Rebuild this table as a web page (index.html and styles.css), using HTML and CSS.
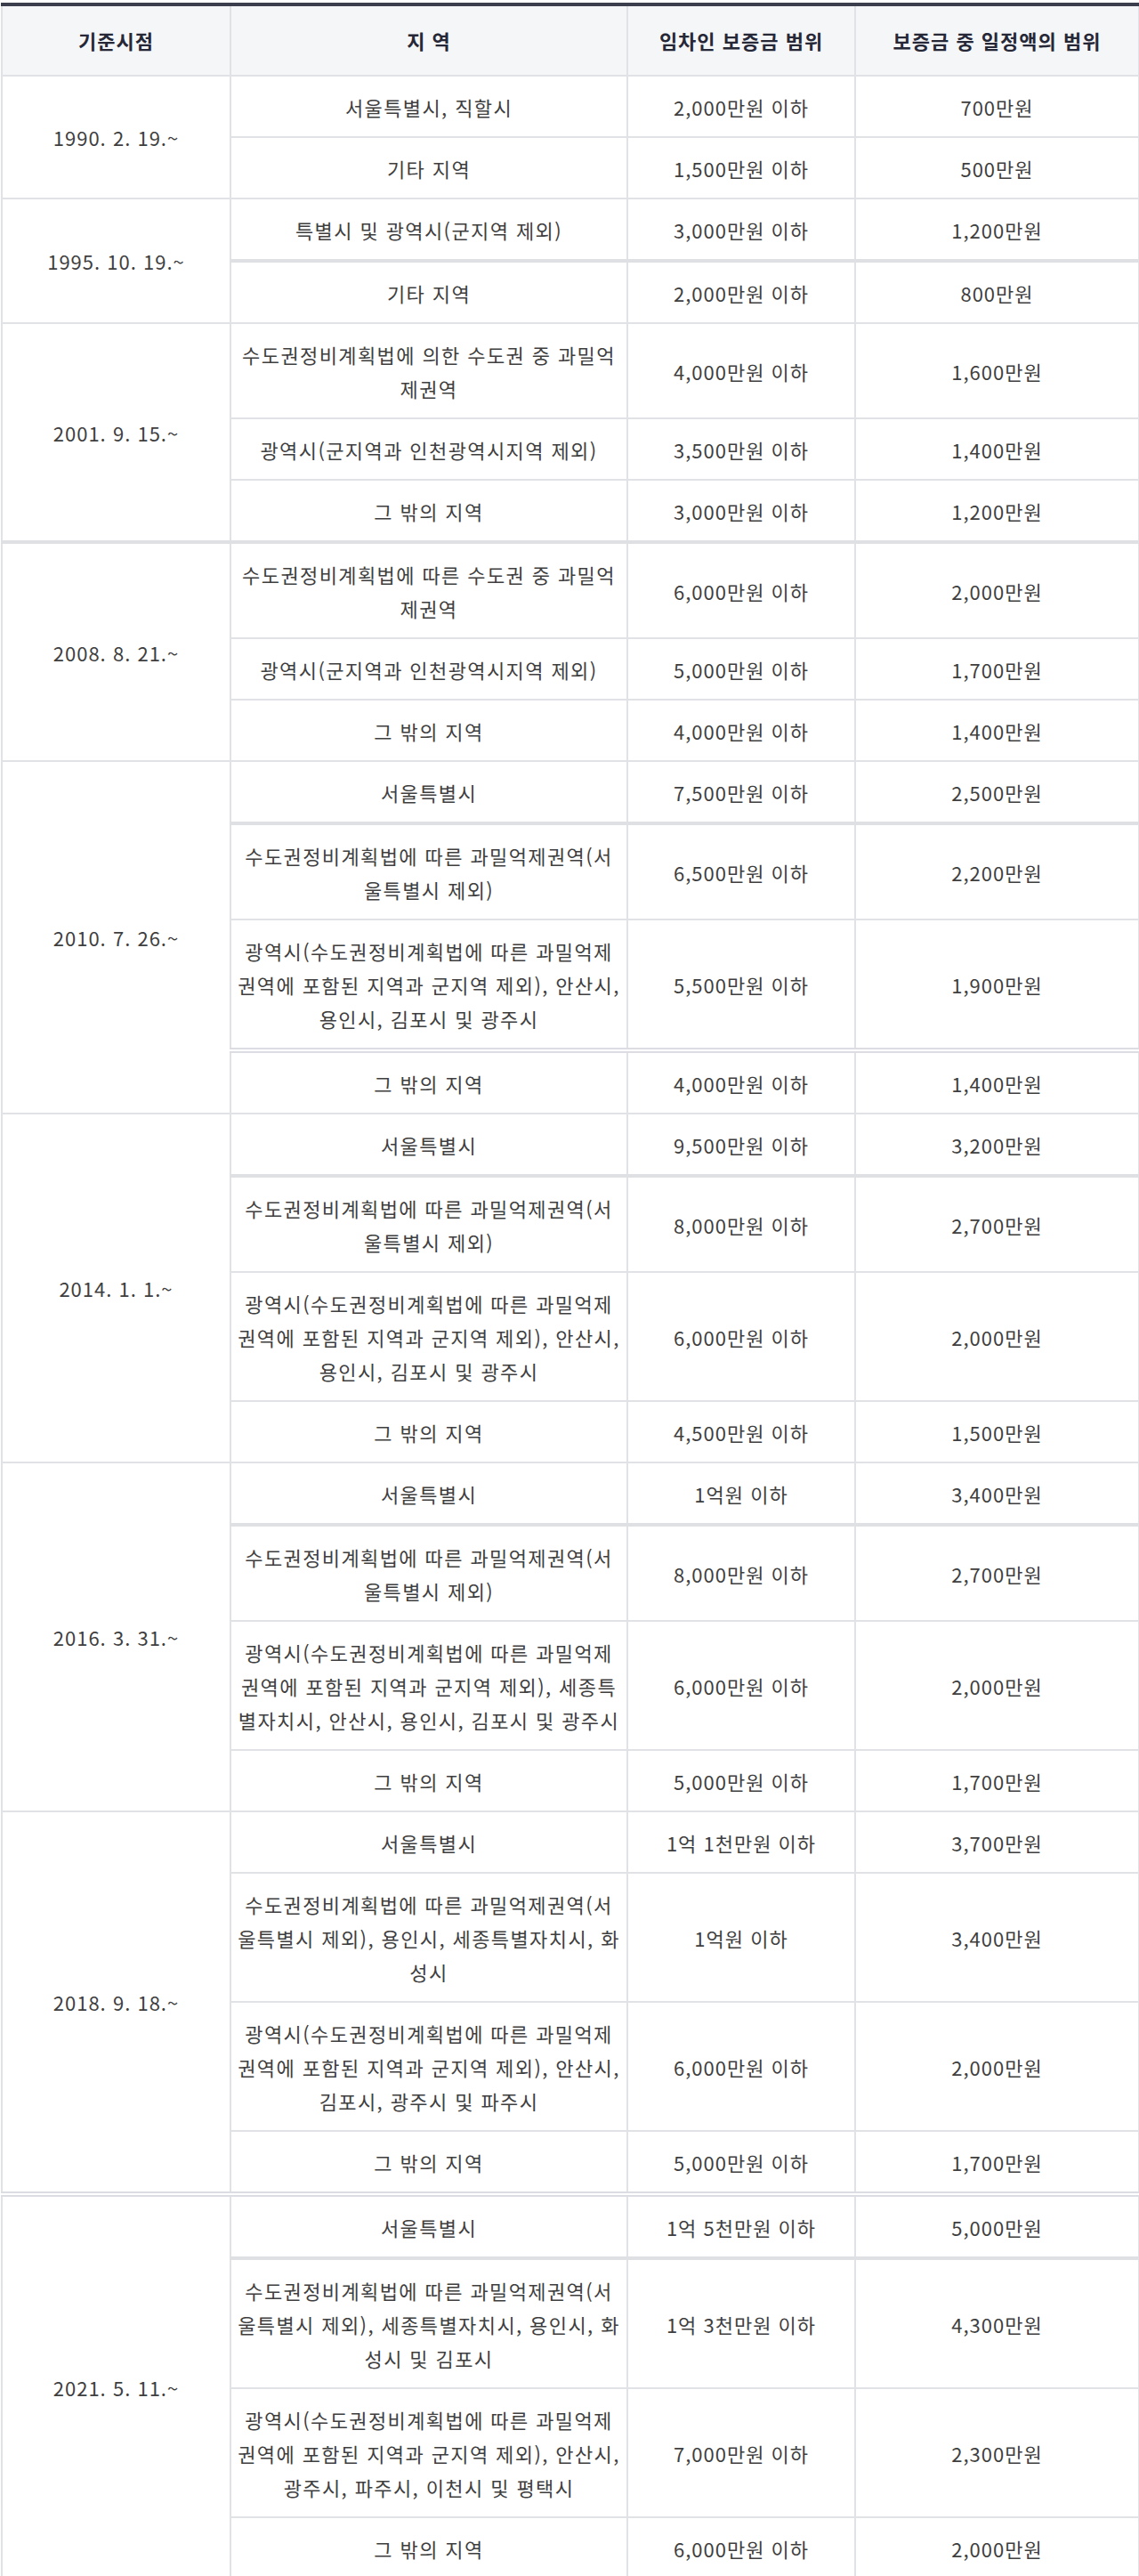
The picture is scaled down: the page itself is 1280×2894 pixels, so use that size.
FILE: index.html
```html
<!DOCTYPE html>
<html lang="ko">
<head>
<meta charset="utf-8">
<title>소액임차인 최우선변제 기준</title>
<link rel="stylesheet" href="styles.css">
</head>
<body>
<div class="wrap">
<table class="tbl">
  <colgroup>
    <col class="c-date">
    <col class="c-area">
    <col class="c-dep">
    <col class="c-amt">
  </colgroup>
  <thead>
    <tr>
      <th>기준시점</th>
      <th>지 역</th>
      <th>임차인 보증금 범위</th>
      <th>보증금 중 일정액의 범위</th>
    </tr>
  </thead>
  <tbody>
    <tr>
      <td rowspan="2">1990. 2. 19.~</td>
      <td class="area">서울특별시, 직할시</td>
      <td>2,000만원 이하</td>
      <td>700만원</td>
    </tr>
    <tr>
      <td class="area">기타 지역</td>
      <td>1,500만원 이하</td>
      <td>500만원</td>
    </tr>

    <tr>
      <td rowspan="2">1995. 10. 19.~</td>
      <td class="area">특별시 및 광역시(군지역 제외)</td>
      <td>3,000만원 이하</td>
      <td>1,200만원</td>
    </tr>
    <tr class="thick">
      <td class="area">기타 지역</td>
      <td>2,000만원 이하</td>
      <td>800만원</td>
    </tr>

    <tr>
      <td rowspan="3">2001. 9. 15.~</td>
      <td class="area">수도권정비계획법에 의한 수도권 중 과밀억<br>제권역</td>
      <td>4,000만원 이하</td>
      <td>1,600만원</td>
    </tr>
    <tr>
      <td class="area">광역시(군지역과 인천광역시지역 제외)</td>
      <td>3,500만원 이하</td>
      <td>1,400만원</td>
    </tr>
    <tr>
      <td class="area">그 밖의 지역</td>
      <td>3,000만원 이하</td>
      <td>1,200만원</td>
    </tr>

    <tr class="thick">
      <td rowspan="3">2008. 8. 21.~</td>
      <td class="area">수도권정비계획법에 따른 수도권 중 과밀억<br>제권역</td>
      <td>6,000만원 이하</td>
      <td>2,000만원</td>
    </tr>
    <tr>
      <td class="area">광역시(군지역과 인천광역시지역 제외)</td>
      <td>5,000만원 이하</td>
      <td>1,700만원</td>
    </tr>
    <tr>
      <td class="area">그 밖의 지역</td>
      <td>4,000만원 이하</td>
      <td>1,400만원</td>
    </tr>

    <tr>
      <td rowspan="4">2010. 7. 26.~</td>
      <td class="area">서울특별시</td>
      <td>7,500만원 이하</td>
      <td>2,500만원</td>
    </tr>
    <tr class="thick">
      <td class="area">수도권정비계획법에 따른 과밀억제권역(서<br>울특별시 제외)</td>
      <td>6,500만원 이하</td>
      <td>2,200만원</td>
    </tr>
    <tr>
      <td class="area">광역시(수도권정비계획법에 따른 과밀억제<br>권역에 포함된 지역과 군지역 제외), 안산시,<br>용인시, 김포시 및 광주시</td>
      <td>5,500만원 이하</td>
      <td>1,900만원</td>
    </tr>
    <tr class="dbl">
      <td class="area">그 밖의 지역</td>
      <td>4,000만원 이하</td>
      <td>1,400만원</td>
    </tr>

    <tr>
      <td rowspan="4">2014. 1. 1.~</td>
      <td class="area">서울특별시</td>
      <td>9,500만원 이하</td>
      <td>3,200만원</td>
    </tr>
    <tr class="thick">
      <td class="area">수도권정비계획법에 따른 과밀억제권역(서<br>울특별시 제외)</td>
      <td>8,000만원 이하</td>
      <td>2,700만원</td>
    </tr>
    <tr>
      <td class="area">광역시(수도권정비계획법에 따른 과밀억제<br>권역에 포함된 지역과 군지역 제외), 안산시,<br>용인시, 김포시 및 광주시</td>
      <td>6,000만원 이하</td>
      <td>2,000만원</td>
    </tr>
    <tr>
      <td class="area">그 밖의 지역</td>
      <td>4,500만원 이하</td>
      <td>1,500만원</td>
    </tr>

    <tr>
      <td rowspan="4">2016. 3. 31.~</td>
      <td class="area">서울특별시</td>
      <td>1억원 이하</td>
      <td>3,400만원</td>
    </tr>
    <tr class="thick">
      <td class="area">수도권정비계획법에 따른 과밀억제권역(서<br>울특별시 제외)</td>
      <td>8,000만원 이하</td>
      <td>2,700만원</td>
    </tr>
    <tr>
      <td class="area">광역시(수도권정비계획법에 따른 과밀억제<br>권역에 포함된 지역과 군지역 제외), 세종특<br>별자치시, 안산시, 용인시, 김포시 및 광주시</td>
      <td>6,000만원 이하</td>
      <td>2,000만원</td>
    </tr>
    <tr>
      <td class="area">그 밖의 지역</td>
      <td>5,000만원 이하</td>
      <td>1,700만원</td>
    </tr>

    <tr>
      <td rowspan="4">2018. 9. 18.~</td>
      <td class="area">서울특별시</td>
      <td>1억 1천만원 이하</td>
      <td>3,700만원</td>
    </tr>
    <tr>
      <td class="area">수도권정비계획법에 따른 과밀억제권역(서<br>울특별시 제외), 용인시, 세종특별자치시, 화<br>성시</td>
      <td>1억원 이하</td>
      <td>3,400만원</td>
    </tr>
    <tr>
      <td class="area">광역시(수도권정비계획법에 따른 과밀억제<br>권역에 포함된 지역과 군지역 제외), 안산시,<br>김포시, 광주시 및 파주시</td>
      <td>6,000만원 이하</td>
      <td>2,000만원</td>
    </tr>
    <tr>
      <td class="area">그 밖의 지역</td>
      <td>5,000만원 이하</td>
      <td>1,700만원</td>
    </tr>

    <tr class="dbl">
      <td rowspan="4">2021. 5. 11.~</td>
      <td class="area">서울특별시</td>
      <td>1억 5천만원 이하</td>
      <td>5,000만원</td>
    </tr>
    <tr class="thick">
      <td class="area">수도권정비계획법에 따른 과밀억제권역(서<br>울특별시 제외), 세종특별자치시, 용인시, 화<br>성시 및 김포시</td>
      <td>1억 3천만원 이하</td>
      <td>4,300만원</td>
    </tr>
    <tr>
      <td class="area">광역시(수도권정비계획법에 따른 과밀억제<br>권역에 포함된 지역과 군지역 제외), 안산시,<br>광주시, 파주시, 이천시 및 평택시</td>
      <td>7,000만원 이하</td>
      <td>2,300만원</td>
    </tr>
    <tr>
      <td class="area">그 밖의 지역</td>
      <td>6,000만원 이하</td>
      <td>2,000만원</td>
    </tr>
  </tbody>
</table>
</div>
</body>
</html>
```

FILE: styles.css
```css
html, body {
  margin: 0;
  padding: 0;
  background: #ffffff;
}

.wrap {
  padding: 3px 1px 2px 1px;
}

.tbl {
  width: 1278px;
  border-collapse: collapse;
  table-layout: fixed;
  border-top: 4px solid #3b3e4c;
  font-family: "Noto Sans CJK KR", "Noto Sans", sans-serif;
  font-size: 22px;
  letter-spacing: 1px;
  color: #3f3f3f;
}

.c-date { width: 257px; }
.c-area { width: 446px; }
.c-dep  { width: 256px; }
.c-amt  { width: 319px; }

.tbl th,
.tbl td {
  border: 2px solid #e1e2e6;
  text-align: center;
  vertical-align: middle;
  line-height: 38px;
  padding: 14.5px 0;
  white-space: nowrap;
}

.tbl th {
  background: #f5f6f8;
  color: #262837;
  font-weight: 700;
  padding: 19px 0 20px;
  border-top: none;
}

.tbl td.area {
  letter-spacing: 1.4px;
}

.tbl tr.thick > td {
  border-top: 4px solid #dfe0e4;
}

.tbl tr.dbl > td {
  border-top: 6px double #dcdde2;
}
```
